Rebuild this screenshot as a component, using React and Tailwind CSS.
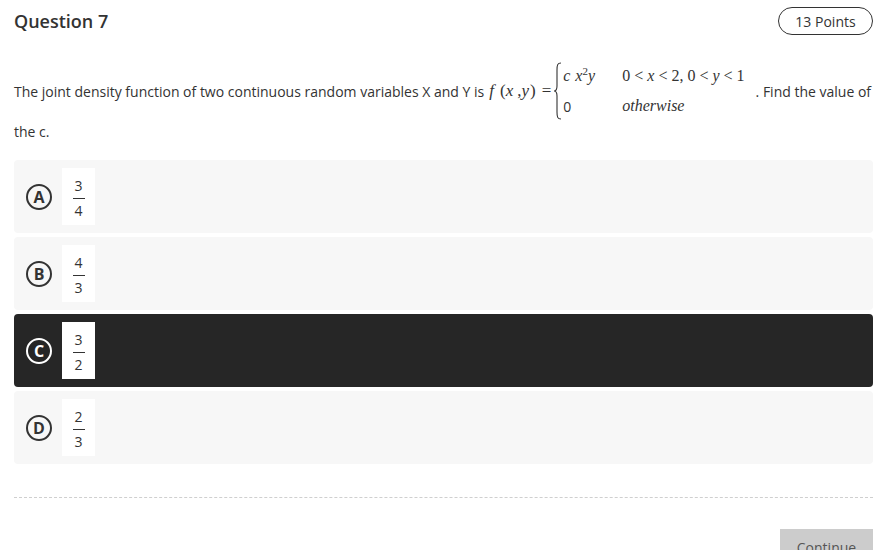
import { useState } from "react";

const options = [
  { key: "A", num: "3", den: "4" },
  { key: "B", num: "4", den: "3" },
  { key: "C", num: "3", den: "2" },
  { key: "D", num: "2", den: "3" },
];

function Brace() {
  return (
    <svg width="9" height="58" viewBox="0 0 9 58" className="shrink-0">
      <path
        d="M8 1 C4.5 1 4 3 4 8 L4 24 C4 27.5 2.5 29 1 29 C2.5 29 4 30.5 4 34 L4 50 C4 55 4.5 57 8 57"
        fill="none"
        stroke="#333"
        strokeWidth="1.1"
      />
    </svg>
  );
}

function Formula() {
  return (
    <span className="inline-flex items-center h-[62px] ml-[5px] mr-[11px] font-['Liberation_Serif',serif] text-[16px] text-[#333]">
      <span className="inline-flex whitespace-nowrap text-[17px]">
        <i>f</i>
        <span className="ml-[6px]">(</span>
        <i>x</i>
        <span className="ml-[4px]">,</span>
        <i>y</i>
        <span className="ml-[1px]">)</span>
        <span className="ml-[6px]">=</span>
      </span>
      <span className="ml-[2px]">
        <Brace />
      </span>
      <span className="grid grid-cols-[59px_auto] grid-rows-[30px_30px] ml-[1px] items-center">
        <span className="whitespace-nowrap">
          <i>c</i>
          <i className="ml-[5px]">x</i>
          <span className="text-[11px] relative -top-[6px]">2</span>
          <i>y</i>
        </span>
        <span className="whitespace-nowrap">
          0 &lt; <i>x</i> &lt; 2, 0 &lt; <i>y</i> &lt; 1
        </span>
        <span className="font-['Open_Sans',sans-serif] text-[14px]">0</span>
        <span>
          <i>otherwise</i>
        </span>
      </span>
    </span>
  );
}

function Option({ opt, selected, onClick }) {
  return (
    <div
      onClick={onClick}
      className={`h-[73px] rounded-sm flex items-center pl-[12px] cursor-pointer ${
        selected ? "bg-[#262626]" : "bg-[#f7f7f7]"
      }`}
    >
      <div
        className={`shrink-0 w-[26px] h-[26px] rounded-full border-2 flex items-center justify-center text-[16px] font-bold ${
          selected ? "border-white text-white" : "border-[#333] text-[#333]"
        }`}
      >
        {opt.key}
      </div>
      <div className="shrink-0 ml-[10px] w-[33px] h-[57px] bg-white flex flex-col items-center justify-center pt-[4px] text-[14px] text-[#333]">
        <span className="leading-[16px]">{opt.num}</span>
        <span className="w-[12px] border-t border-[#333] my-[4px]"></span>
        <span className="leading-[16px]">{opt.den}</span>
      </div>
    </div>
  );
}

export default function App() {
  const [selected, setSelected] = useState("C");

  return (
    <div className="w-[884px] h-[550px] overflow-hidden bg-white pl-[14px] pr-[11px] font-['Open_Sans',sans-serif] text-[#333]">
      {/* header */}
      <div className="h-[42px] flex items-center justify-between">
        <h1 className="text-[18px] font-semibold text-[#333]">Question 7</h1>
        <div className="h-[28px] w-[95px] rounded-full border border-[#333] flex items-center justify-center text-[14px]">
          13 Points
        </div>
      </div>

      {/* question */}
      <div className="mt-[18px] text-[14px]">
        <div className="h-[62px] flex items-center whitespace-nowrap">
          <span>The joint density function of two continuous random variables X and Y is</span>
          <Formula />
          <span>. Find the value of</span>
        </div>
        <div className="leading-[20px]">the c.</div>
      </div>

      {/* options */}
      <div className="mt-[18px] flex flex-col gap-1">
        {options.map((o) => (
          <Option key={o.key} opt={o} selected={selected === o.key} onClick={() => setSelected(o.key)} />
        ))}
      </div>

      <div className="mt-[33px] border-t border-dashed border-[#cfcfcf]"></div>

      <div className="mt-[31px] flex justify-end">
        <button className="w-[93px] h-[36px] bg-[#cccccc] text-[14px] text-[#555]">
          Continue
        </button>
      </div>
    </div>
  );
}
